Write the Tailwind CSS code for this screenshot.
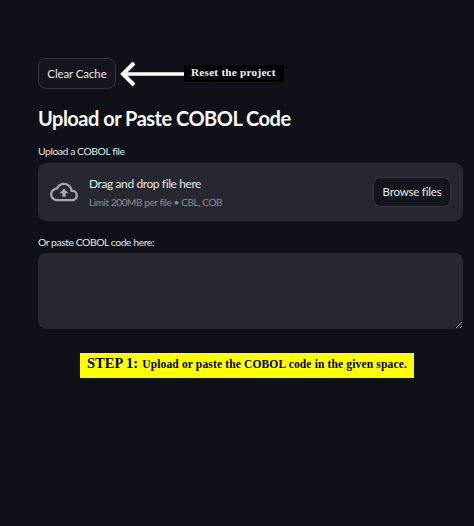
<!DOCTYPE html>
<html>
<head>
    <title>Upload COBOL</title>
    <meta name="viewport" content="width=device-width, initial-scale=1.0">
    <script src="https://cdn.jsdelivr.net/npm/@tailwindcss/browser@4"></script>
</head>
<body class="bg-[#0e1117] text-[#fafafa] font-['Lato','Noto_Sans',sans-serif] h-[526px] overflow-hidden">
    <div class="pl-[38px] pr-[11px] pt-[58px]">
        <!-- clear cache + annotation -->
        <div class="flex items-center h-[31px]">
            <button class="w-[78px] h-[31px] rounded-lg border border-[#31343c] bg-[#13161d] text-[11.5px] tracking-[-0.1px] text-[#e8e9ea]">Clear Cache</button>
            <svg class="ml-[3px] w-[65px] h-[26px] shrink-0" viewBox="0 0 65 26" fill="none" stroke="#ffffff" stroke-width="3.6">
                <path d="M4 13H65"/>
                <path d="M15 2L4 13L15 24" stroke-width="4"/>
            </svg>
            <span class="bg-black h-[17px] w-[100px] pl-[7px] text-[11.2px] leading-[15px] font-bold text-[#f4f4f4] font-['Liberation_Serif',serif] tracking-[0.25px] whitespace-nowrap">Reset the project</span>
        </div>

        <h1 class="mt-[14px] text-[20px] leading-[30px] font-bold tracking-[-0.5px] text-[#fafafa]">Upload or Paste COBOL Code</h1>

        <label class="block mt-[11px] text-[10.4px] leading-[14px] tracking-[-0.45px] text-[#e4e5e8]">Upload a COBOL file</label>
        <div class="mt-[5px] h-[58px] rounded-lg bg-[#262730] flex items-center pl-[12px] pr-[12px]">
            <svg class="w-[28px] h-[28px] text-[#a3a8b4]" viewBox="0 0 24 24" fill="currentColor">
                <path d="M19.35 10.04A7.49 7.49 0 0 0 12 4C9.11 4 6.6 5.64 5.35 8.04A5.994 5.994 0 0 0 0 14c0 3.31 2.69 6 6 6h13c2.76 0 5-2.24 5-5 0-2.64-2.05-4.78-4.65-4.96zM19 18H6c-2.21 0-4-1.79-4-4 0-2.05 1.53-3.76 3.56-3.97l1.07-.11.5-.95A5.469 5.469 0 0 1 12 6c2.62 0 4.88 1.86 5.39 4.43l.3 1.5 1.53.11A2.98 2.98 0 0 1 22 15c0 1.65-1.35 3-3 3zM8 13h2.55v3h2.9v-3H16l-4-4z"/>
            </svg>
            <div class="ml-[11px]">
                <div class="text-[12px] leading-[18px] tracking-[-0.4px] text-[#e6e7e9]">Drag and drop file here</div>
                <div class="mt-[2px] text-[10px] leading-[14px] tracking-[-0.4px] text-[#8b8e96]">Limit 200MB per file • CBL, COB</div>
            </div>
            <button class="ml-auto w-[78px] h-[30px] rounded-lg border border-[#31343c] bg-[#13161d] text-[11.5px] tracking-[-0.2px] text-[#e8e9ea]">Browse files</button>
        </div>

        <label class="block mt-[14px] text-[10.4px] leading-[14px] tracking-[-0.45px] text-[#e4e5e8]">Or paste COBOL code here:</label>
        <textarea class="block mt-[4px] w-full h-[76px] rounded-lg bg-[#262730] resize-y outline-none"></textarea>

        <div class="ml-[42px] mt-[24px] w-[334px] h-[25px] bg-[#ffff00] pl-[7px] text-black font-bold font-['Liberation_Serif',serif] leading-[20px] whitespace-nowrap">
            <span class="text-[14.5px]">STEP 1:</span> <span class="text-[11.5px] tracking-[0.15px]">Upload or paste the COBOL code in the given space.</span>
        </div>
    </div>
</body>
</html>
